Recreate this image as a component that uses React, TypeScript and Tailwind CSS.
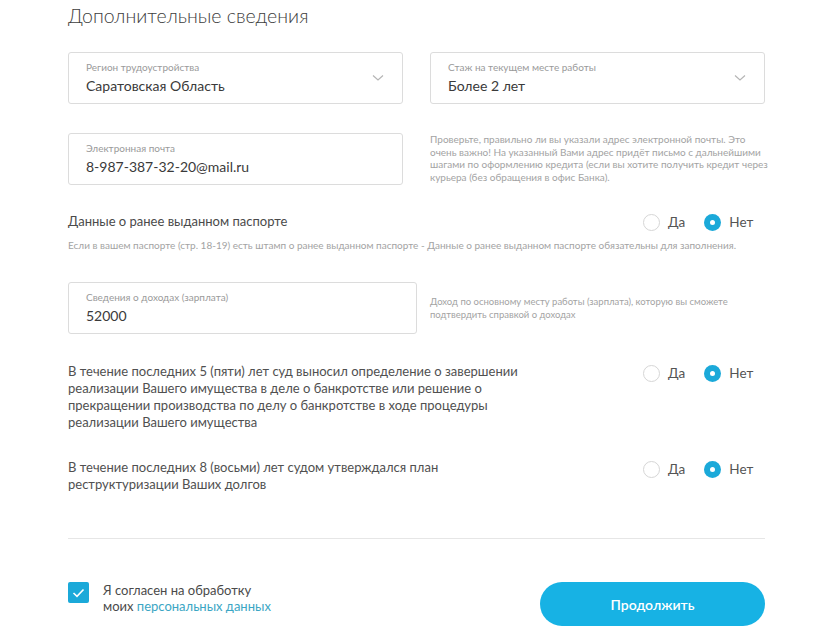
import React from "react";

const font = { fontFamily: 'Lato, "Open Sans", sans-serif' };

const Chevron = () => (
    <svg width="12" height="8" viewBox="0 0 12 8" className="shrink-0">
        <path d="M1 1.5 L6 6 L11 1.5" fill="none" stroke="#b5b5b5" strokeWidth="1.2" />
    </svg>
);

const Field = ({ label, value, select, className }: { label: string; value: string; select?: boolean; className?: string }) => (
    <div className={`h-[52px] border border-[#dcdcdc] rounded-[3px] bg-white flex items-center pl-[17px] pr-[18px] ${className ?? ""}`}>
        <div className="flex-1">
            <div className="text-[10px] leading-[13px] text-[#9a9a9a]">{label}</div>
            <div className="text-[14px] leading-[20px] text-[#3a3a3a] mt-[2px]">{value}</div>
        </div>
        {select && <Chevron />}
    </div>
);

const Radio = ({ checked, label }: { checked?: boolean; label: string }) => (
    <div className="flex items-center gap-[8px]">
        {checked ? (
            <span className="w-[17px] h-[17px] rounded-full bg-[#1ba9d9] flex items-center justify-center">
                <span className="w-[5px] h-[5px] rounded-full bg-white" />
            </span>
        ) : (
            <span className="w-[17px] h-[17px] rounded-full border border-[#d6d6d6] bg-white" />
        )}
        <span className="text-[13.5px] text-[#555]">{label}</span>
    </div>
);

const YesNo = () => (
    <div className="flex items-center gap-[19px] w-[122px] shrink-0 self-start">
        <Radio label="Да" />
        <Radio label="Нет" checked />
    </div>
);

export default function App() {
    return (
        <div className="w-[835px] h-[639px] bg-white overflow-hidden" style={font}>
            <div className="ml-[68px] w-[697px]">
                <h1 className="text-[19.5px] leading-[28px] font-light text-[#3d3d3d] pt-[2px]">Дополнительные сведения</h1>

                <div className="grid grid-cols-2 gap-[27px] mt-[22px]">
                    <Field label="Регион трудоустройства" value="Саратовская Область" select />
                    <Field label="Стаж на текущем месте работы" value="Более 2 лет" select />
                </div>

                <div className="flex gap-[27px] mt-[29px]">
                    <Field label="Электронная почта" value="8-987-387-32-20@mail.ru" className="w-[335px] shrink-0" />
                    <p className="text-[10px] leading-[12.5px] text-[#a3a3a3] whitespace-nowrap">
                        Проверьте, правильно ли вы указали адрес электронной почты. Это<br />
                        очень важно! На указанный Вами адрес придёт письмо с дальнейшими<br />
                        шагами по оформлению кредита (если вы хотите получить кредит через<br />
                        курьера (без обращения в офис Банка).
                    </p>
                </div>

                <div className="flex items-center justify-between mt-[27px]">
                    <span className="text-[13px] text-[#4a4a4a]">Данные о ранее выданном паспорте</span>
                    <YesNo />
                </div>
                <p className="text-[10px] leading-[13px] text-[#a3a3a3] mt-[7px]">
                    Если в вашем паспорте (стр. 18-19) есть штамп о ранее выданном паспорте - Данные о ранее выданном паспорте обязательны для заполнения.
                </p>

                <div className="flex items-center gap-[13px] mt-[30px]">
                    <Field label="Сведения о доходах (зарплата)" value="52000" className="w-[349px] shrink-0" />
                    <p className="text-[9.5px] leading-[13px] text-[#a3a3a3] whitespace-nowrap">
                        Доход по основному месту работы (зарплата), которую вы сможете<br />
                        подтвердить справкой о доходах
                    </p>
                </div>

                <div className="flex justify-between mt-[29px]">
                    <p className="text-[13px] leading-[17px] text-[#505050] w-[462px]">
                        В течение последних 5 (пяти) лет суд выносил определение о завершении реализации Вашего имущества в деле о банкротстве или решение о прекращении производства по делу о банкротстве в ходе процедуры реализации Вашего имущества
                    </p>
                    <YesNo />
                </div>

                <div className="flex justify-between mt-[28px]">
                    <p className="text-[13px] leading-[17px] text-[#505050] w-[462px]">
                        В течение последних 8 (восьми) лет судом утверждался план реструктуризации Ваших долгов
                    </p>
                    <YesNo />
                </div>

                <div className="border-t border-[#e6e6e6] mt-[45px]" />

                <div className="flex items-start justify-between mt-[43px]">
                    <div className="flex items-start gap-[14px]">
                        <span className="w-[21px] h-[21px] rounded-[2px] bg-[#1ba9d9] flex items-center justify-center">
                            <svg width="13" height="10" viewBox="0 0 13 10">
                                <path d="M1.5 5 L5 8.3 L11.5 1.5" fill="none" stroke="white" strokeWidth="1.6" />
                            </svg>
                        </span>
                        <div className="text-[13px] leading-[15.5px] text-[#4a4a4a] mt-[1px]">
                            <div>Я согласен на обработку</div>
                            <div>моих <span className="text-[#3ba6c4]">персональных данных</span></div>
                        </div>
                    </div>
                    <button className="w-[225px] h-[44px] rounded-full bg-[#17b2e4] text-white text-[14px] font-semibold">Продолжить</button>
                </div>
            </div>
        </div>
    );
}
